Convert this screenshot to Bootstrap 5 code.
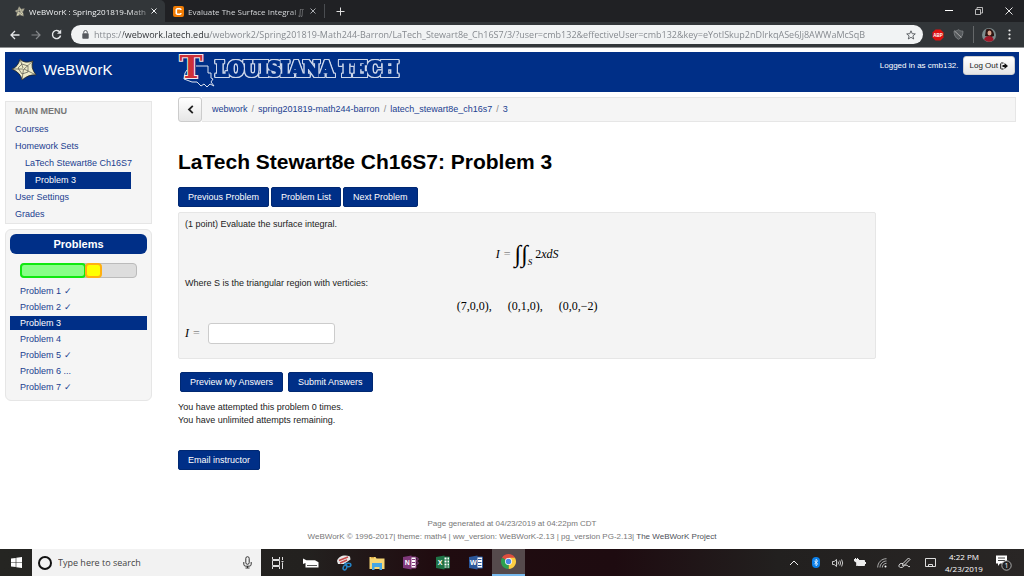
<!DOCTYPE html>
<html lang="en">
<head>
<meta charset="utf-8">
<meta name="viewport" content="width=device-width, initial-scale=1">
<title>WeBWorK : Spring201819-Math244-Barron</title>
<link href="https://cdn.jsdelivr.net/npm/bootstrap@5.3.0/dist/css/bootstrap.min.css" rel="stylesheet">
<style>
:root { --navy: #002f87; --panel: #f5f5f5; --line: #e6e6e6; --chalk: #cdd7ea; }
body { font: 9px/13px "Liberation Sans", Arial, sans-serif; color: #222; background: #fff; }
button, input { font: inherit; }
a { color: #1b4090; text-decoration: none; }
svg { display: block; flex: none; overflow: visible; }
.plain { border: 0; padding: 0; background: none; color: inherit; display: flex; align-items: center; justify-content: center; }
.ui-font { font-family: "Open Sans", "Noto Sans", sans-serif; }

/* browser window */
.tabstrip { background: #202124; color: #d5d7da; height: 22px; }
.tab { height: 22px; padding: 0 7px 0 14px; gap: 4px; width: 165px; }
.tab.current { background: #323639; border-radius: 0 5px 0 0; color: #f1f3f4; }
.tab.other { width: 160px; padding-left: 8px; border-right: 1px solid #4a4d51; height: 14px; }
.tab-title { flex: 1; font-size: 8px; white-space: nowrap; min-width: 0; color: inherit;
  -webkit-mask-image: linear-gradient(90deg, #000 85%, #0006); mask-image: linear-gradient(90deg, #000 85%, #0006); }
.win-btn { width: 30px; height: 20px; }
.toolbar { background: #323639; color: #e4e6e8; height: 26px; padding: 0 4px; border-bottom: 1px solid #8f9193; }
.nav-btn { width: 21px; height: 20px; }
.omnibox { background: #f1f3f4; border-radius: 10px; height: 19px; padding: 0 7px; color: #5f6368; gap: 5px; }
.url { border: 0; outline: 0; padding: 0; flex: 1; min-width: 0; height: 17px; font-size: 9px;
  background: linear-gradient(90deg, #80848a 29px, #2b2e32 29px 115px, #80848a 115px);
  -webkit-background-clip: text; background-clip: text; -webkit-text-fill-color: transparent; }

/* WeBWorK header */
.page { padding: 4px 5px 0; }
.masthead { background: var(--navy); color: #fff; min-height: 40px; }
.brand-side { flex: 0 0 17%; padding-left: 6px; padding-bottom: 4px; gap: 6px; }
.brand-name { font-size: 15px; line-height: 18px; color: #fff; }
.school { font: bold 20px/26px "DejaVu Serif Condensed", "DejaVu Serif", serif; color: var(--navy); -webkit-text-stroke: 2px var(--navy); white-space: nowrap;
  filter: drop-shadow(1px 0 0 var(--chalk)) drop-shadow(-1px 0 0 var(--chalk)) drop-shadow(0 1px 0 var(--chalk)) drop-shadow(0 -1px 0 var(--chalk)); }
.account { font-size: 8px; }
.logout { background: linear-gradient(#fff, #e6e6e6); border: 1px solid #d0d0d0; border-radius: 3px; color: #222; padding: 2px 6px; gap: 2px; display: flex; align-items: center; }

/* sidebar */
.sidebar { flex: 0 0 147px; width: 147px; padding-top: 9px; }
.panel { background: var(--panel); border: 1px solid var(--line); }
.menu { padding: 0 9px; margin-bottom: 5px; }
.menu h2 { font-size: 9px; font-weight: bold; line-height: 18px; color: #777; margin: 0 0 1px; }
.menu a { display: block; line-height: 17px; }
.menu .nested { padding-left: 10px; white-space: nowrap; }
.menu .here { background: var(--navy); color: #fff; margin: 0 11px 0 10px; padding-left: 10px; }
.problems { border-radius: 6px; padding: 4px 4px 4px; }
.problems h2 { background: var(--navy); color: #fff; border-radius: 6px; font-size: 11px; font-weight: bold; line-height: 20px; text-align: center; margin: 0 0 9px; }
.meter { height: 15px; margin: 0 10px 6px; background: #ddd; border: 1px solid #bbb; border-radius: 4px; }
.meter-part { height: 15px; margin: -1px 0 -1px -1px; border-radius: 4px; border: 2px solid; }
.meter-done { background: #88ff88; border-color: #10e810; }
.meter-half { background: #ffff00; border-color: #ffb010; }
.problems a { display: block; line-height: 14px; padding-left: 10px; margin-bottom: 2px; }
.problems .here { background: var(--navy); color: #fff; }

/* main column */
.main { flex: 1; min-width: 0; padding: 5px 3px 0 26px; }
.crumb-back { width: 24px; height: 25px; background: linear-gradient(#fff, #e6e6e6); border: 1px solid #ccc; border-radius: 3px; }
.crumbs { flex: 1; background: var(--panel); border: 1px solid var(--line); border-left: 0; padding: 5px 10px; gap: 4px; margin: 0; }
.crumbs li { white-space: nowrap; }
.slash { color: #888; }
h1 { font-size: 21px; line-height: 26px; font-weight: bold; color: #000; margin: 27px 0 12px; }
.btn-navy { --bs-btn-bg: var(--navy); --bs-btn-color: #fff; --bs-btn-border-color: #002872; --bs-btn-hover-bg: #00236a; --bs-btn-hover-color: #fff;
  --bs-btn-padding-x: 9px; --bs-btn-padding-y: 2px; --bs-btn-font-size: 9px; --bs-btn-line-height: 14px; --bs-btn-border-radius: 2px; }
.step-buttons { gap: 2px; }
.problem { background: #f4f4f4; border: 1px solid var(--line); border-radius: 2px; padding: 5px 6px 14px; margin-top: 5px; }
.formula { font-family: "Liberation Serif", "Times New Roman", serif; font-size: 12px; color: #000; display: flex; align-items: center; justify-content: center; }
.display-math { margin: 10px 0; }
.equals { color: #8a8a8a; margin: 0 4px; }
.integral { font: italic 24px/26px "Liberation Serif", serif; }
.under { font-size: 9px; align-self: flex-end; line-height: 10px; }
.answer { width: 127px; height: 21px; border: 1px solid #ccc; border-radius: 3px; background: #fff; padding: 2px 4px; }
.answer-buttons { gap: 5px; margin: 13px 0 9px 2px; }
.attempts { margin-bottom: 23px; }
.foot { color: #777; font-size: 8px; line-height: 13px; text-align: center; padding-bottom: 6px; }
.foot a { color: #4d5058; }

/* taskbar */
.taskbar { height: 27px; background: linear-gradient(90deg, #252522 0, #23211f 30%, #200c10 42%, #1e0b10 60%, #22201f 76%, #292625 100%); color: #fff; }
.start { width: 32px; height: 27px; }
.seek { width: 229px; height: 27px; background: #f2f2f2; color: #222; padding: 0 9px 0 6px; gap: 6px; }
.seek input { border: 0; outline: 0; background: none; flex: 1; min-width: 0; padding: 0; font-size: 9px; }
.seek input::placeholder { color: #444; opacity: 1; }
.app { width: 33px; height: 27px; }
.app.running { background: #554a4c; border-bottom: 2px solid #76b9ed; }
.tray { width: 22px; height: 27px; }
.clock { width: 46px; font-size: 8px; line-height: 12px; text-align: center; }
</style>
</head>
<body class="min-vh-100 d-flex flex-column">

<header class="ui-font">
  <div class="tabstrip d-flex align-items-center">
    <div class="tab current d-flex align-items-center">
      <svg width="11" height="11" viewBox="0 0 26 26"><path d="M2 12 9 8 12 1 17 7 25 6 21 14 23 24 14 21 6 24 7 16Z" fill="#e6e2bd" stroke="#555" stroke-width="1"/><path d="M9 8 17 7 21 14 14 21 7 16ZM2 12 21 14M12 1 14 21M25 6 7 16M23 24 9 8" fill="none" stroke="#555"/></svg>
      <a class="tab-title" href="#">WeBWorK : Spring201819-Math2</a>
      <button class="plain" aria-label="Close tab"><svg width="8" height="8" viewBox="0 0 8 8" stroke="currentColor"><path d="M1.500 1.500l5 5M6.500 1.500l-5 5"/></svg></button>
    </div>
    <div class="tab other d-flex align-items-center">
      <svg width="11" height="11" viewBox="0 0 11 11"><rect width="11" height="11" rx="2" fill="#f07c05"/><path d="M7.800 4V3.300L7 2.700H4.200L3.300 3.500v4l.9.8H7l.8-.6V7" fill="none" stroke="#fff" stroke-width="1.600"/></svg>
      <a class="tab-title" href="#">Evaluate The Surface Integral ∬</a>
      <button class="plain" aria-label="Close tab"><svg width="8" height="8" viewBox="0 0 8 8" stroke="#a9acb0"><path d="M1.500 1.500l5 5M6.500 1.500l-5 5"/></svg></button>
    </div>
    <button class="plain win-btn" aria-label="New tab"><svg width="9" height="9" viewBox="0 0 9 9" stroke="#e0e0e0"><path d="M4.500.5v8M.5 4.500h8"/></svg></button>
    <div class="d-flex ms-auto">
      <button class="plain win-btn" aria-label="Minimize"><svg width="8" height="8" viewBox="0 0 8 8" stroke="#fff"><path d="M0 3.500h8"/></svg></button>
      <button class="plain win-btn" aria-label="Restore"><svg width="8" height="8" viewBox="0 0 8 8" stroke="#ddd" fill="none"><path d="M.5 2.500h5v5h-5zM2 2.500V.5h5.500V6H5.500" stroke-width=".8"/></svg></button>
      <button class="plain win-btn" aria-label="Close"><svg width="8" height="8" viewBox="0 0 8 8" stroke="#fff"><path d="M.5.5l7 7M7.500.5l-7 7" stroke-width=".9"/></svg></button>
    </div>
  </div>
  <div class="toolbar d-flex align-items-center">
    <button class="plain nav-btn" aria-label="Back"><svg width="10" height="10" viewBox="0 0 10 10" fill="none" stroke="currentColor" stroke-width="1.300"><path d="M9.500 5H1M5 1 1 5l4 4"/></svg></button>
    <button class="plain nav-btn" aria-label="Forward"><svg width="10" height="10" viewBox="0 0 10 10" fill="none" stroke="#85888b" stroke-width="1.200"><path d="M.5 5H9M5 1l4 4-4 4"/></svg></button>
    <button class="plain nav-btn me-1" aria-label="Reload"><svg width="11" height="11" viewBox="0 0 11 11" fill="none" stroke="currentColor" stroke-width="1.400"><path d="M9 3.200A4.100 4.100 0 1 0 9.600 6.500"/><path d="M10.200.5v4.200H6z" fill="currentColor" stroke="none"/></svg></button>
    <form class="omnibox d-flex align-items-center flex-grow-1">
      <svg class="ms-1" width="7" height="9" viewBox="0 0 7 9"><rect y="3.300" x=".3" width="6.400" height="5.400" rx=".8" fill="#55595e"/><path d="M1.700 3.500V2.300a1.800 1.800 0 0 1 3.600 0v1.200" fill="none" stroke="#55595e"/></svg>
      <input class="url" aria-label="Address" value="https://webwork.latech.edu/webwork2/Spring201819-Math244-Barron/LaTech_Stewart8e_Ch16S7/3/?user=cmb132&amp;effectiveUser=cmb132&amp;key=eYotISkup2nDIrkqASe6Jj8AWWaMcSqB">
      <svg width="10" height="10" viewBox="0 0 10 10" fill="none" stroke="#55595e" stroke-width=".9"><path d="M5 .8l1.200 2.900 3.100.2-2.400 2 .8 3.100L5 7.300 2.300 9l.8-3.100-2.400-2 3.100-.2z"/></svg>
    </form>
    <button class="plain nav-btn ms-1" aria-label="Adblock Plus"><svg width="12" height="12" viewBox="0 0 12 12"><path d="M3.500.5h5l3 3v5l-3 3h-5l-3-3v-5z" fill="#e01010"/><text x="6" y="7.800" font-size="4.500" font-weight="bold" text-anchor="middle" fill="#fff" font-family="Liberation Sans">ABP</text></svg></button>
    <button class="plain nav-btn" aria-label="Shield"><svg width="11" height="11" viewBox="0 0 11 11" stroke="#777b7e" fill="#55595c"><path d="M1 2.200C3 2.200 4.300 1.500 5.500.7 6.700 1.500 8 2.200 10 2.200 10 6 8.500 9 5.500 10.300 2.500 9 1 6 1 2.200z"/><path d="M1.500 2l7 6.500" stroke="#aaa"/></svg></button>
    <span class="vr my-1 ms-1 text-white"></span>
    <button class="plain nav-btn ms-1" aria-label="Profile"><svg width="14" height="14" viewBox="0 0 14 14"><circle cx="7" cy="7" r="7" fill="#7c8c8d"/><path d="M4 1.500C8.500-1 12.500 3 12 8l-3 1-6-1z" fill="#2c1513"/><ellipse cx="7.500" cy="5" rx="2" ry="2.600" fill="#d9a58c"/><path d="M2 11.500C3 8.500 5 8 7.500 8c3 .5 4 2 4 4.300a7 7 0 0 1-9.500-.8z" fill="#a01828"/></svg></button>
    <button class="plain nav-btn" aria-label="Menu"><svg width="3" height="11" viewBox="0 0 3 11" fill="#eee"><circle cx="1.500" cy="1.500" r="1.100"/><circle cx="1.500" cy="5.500" r="1.100"/><circle cx="1.500" cy="9.500" r="1.100"/></svg></button>
  </div>
</header>

<div class="page flex-grow-1 d-flex flex-column">
  <div class="masthead d-flex">
    <div class="brand-side d-flex align-items-center">
      <svg width="26" height="24" viewBox="0 0 26 24"><path d="M1 11Q7 9 9 1 13 6 22 3 19 9 25 17 18 16 11 22 10 15 1 11Z" fill="#eeebc9" stroke="#24241e" stroke-width=".8"/><path d="M7 10 11 6 17 8 17 14 11 16ZM1 11l11 0M9 1l3 9M22 3l-9 8M25 17l-12-6M11 22l1.500-11" fill="none" stroke="#55554a" stroke-width=".7"/></svg>
      <a href="#" class="brand-name">WeBWorK</a>
    </div>
    <div class="d-flex">
      <svg width="38" height="38" viewBox="0 0 38 38"><path d="M19 14H31V21H34V26L36 27 34 30 37 34 33 32 30 35 27 32 24 34 20 30 15 30 7 27 8 21 10 18" fill="#002f87" stroke="#dce3f0" stroke-width="1"/><text x="14" y="26" text-anchor="middle" font-family="DejaVu Serif" font-weight="bold" font-size="31" fill="#cc3038" stroke="#f4e9ec" stroke-width="2" paint-order="stroke">T</text></svg>
      <a href="#" class="school pt-1">LOUISIANA TECH</a>
    </div>
    <div class="account ms-auto d-flex align-items-center align-self-start pt-1 pe-1">
      <span class="me-1">Logged in as cmb132.</span>
      <button class="logout">Log Out <svg width="8" height="8" viewBox="0 0 8 8"><path d="M3.500 1H1.300L.7 1.600v4.800l.6.6h2.200" fill="none" stroke="#111"/><path d="M2.500 2.900h2V1L8 4 4.500 7V5.100h-2z" fill="#111"/></svg></button>
    </div>
  </div>

  <div class="d-flex align-items-start">
    <aside class="sidebar">
      <nav class="panel menu" aria-label="Main menu">
        <h2>MAIN MENU</h2>
        <a href="#">Courses</a>
        <a href="#">Homework Sets</a>
        <a href="#" class="nested">LaTech Stewart8e Ch16S7</a>
        <a href="#" class="here">Problem 3</a>
        <a href="#">User Settings</a>
        <a href="#">Grades</a>
      </nav>
      <nav class="panel problems" aria-label="Problems">
        <h2>Problems</h2>
        <div class="meter d-flex"><div class="meter-part meter-done" style="width:57%"></div><div class="meter-part meter-half" style="width:15%"></div></div>
        <a href="#">Problem 1 ✓</a>
        <a href="#">Problem 2 ✓</a>
        <a href="#" class="here">Problem 3</a>
        <a href="#">Problem 4</a>
        <a href="#">Problem 5 ✓</a>
        <a href="#">Problem 6 ...</a>
        <a href="#">Problem 7 ✓</a>
      </nav>
    </aside>

    <main class="main">
      <nav class="d-flex" aria-label="Breadcrumb">
        <button class="plain crumb-back" aria-label="Back"><svg width="7" height="9" viewBox="0 0 7 9"><path d="M5.800.8 2 4.500l3.800 3.700" fill="none" stroke="#222" stroke-width="1.800"/></svg></button>
        <ol class="crumbs d-flex list-unstyled">
          <li><a href="#">webwork</a></li><li class="slash">/</li>
          <li><a href="#">spring201819-math244-barron</a></li><li class="slash">/</li>
          <li><a href="#">latech_stewart8e_ch16s7</a></li><li class="slash">/</li>
          <li><a href="#">3</a></li>
        </ol>
      </nav>
      <h1>LaTech Stewart8e Ch16S7: Problem 3</h1>
      <div class="d-flex step-buttons">
        <button class="btn btn-navy">Previous Problem</button>
        <button class="btn btn-navy">Problem List</button>
        <button class="btn btn-navy">Next Problem</button>
      </div>
      <div class="row g-0"><div class="col-10">
        <form class="problem">
          <div>(1 point) Evaluate the surface integral.</div>
          <div class="formula display-math"><i>I</i><span class="equals">=</span><span class="integral">∫∫</span><i class="under">S</i><span>&nbsp;2<i>xdS</i></span></div>
          <div>Where S is the triangular region with verticies:</div>
          <div class="formula display-math gap-3"><span>(7,0,0),</span><span>(0,1,0),</span><span>(0,0,−2)</span></div>
          <div class="d-flex align-items-center"><label for="ans" class="formula"><i>I</i><span class="equals">=</span></label><input id="ans" class="answer ms-1"></div>
        </form>
      </div></div>
      <div class="d-flex answer-buttons">
        <button class="btn btn-navy">Preview My Answers</button>
        <button class="btn btn-navy">Submit Answers</button>
      </div>
      <p class="attempts">You have attempted this problem 0 times.<br>You have unlimited attempts remaining.</p>
      <button class="btn btn-navy">Email instructor</button>
    </main>
  </div>

  <footer class="foot mt-auto">
    <div>Page generated at 04/23/2019 at 04:22pm CDT</div>
    <div>WeBWorK © 1996-2017| theme: math4 | ww_version: WeBWorK-2.13 | pg_version PG-2.13| <a href="#">The WeBWorK Project</a></div>
  </footer>
</div>

<div class="taskbar ui-font d-flex align-items-center">
  <button class="plain start" aria-label="Start"><svg width="11" height="11" viewBox="0 0 11 11" fill="#fff"><path d="M0 1.600 4.700.9v4.300H0zM5.300.8 11 0v5.200H5.300zM0 5.800h4.700v4.300L0 9.400zM5.300 5.800H11V11l-5.700-.8z"/></svg></button>
  <form class="seek d-flex align-items-center">
    <svg width="14" height="14" viewBox="0 0 14 14"><circle cx="7" cy="7" r="6" fill="none" stroke="#111" stroke-width="2"/></svg>
    <input type="text" placeholder="Type here to search" aria-label="Search">
    <svg width="9" height="13" viewBox="0 0 9 13" fill="none" stroke="#333"><rect x="2.800" y=".7" width="3.400" height="7.600" rx="1.700"/><path d="M.8 6v2.200a2 2 0 0 0 2 2h3.400a2 2 0 0 0 2-2V6M4.500 10v2M2.500 12h4"/></svg>
  </form>
  <button class="plain app" aria-label="Task view"><svg width="12" height="12" viewBox="0 0 12 12" fill="none" stroke="#ddd"><path d="M.5 0v2.500h7V0M.5 12V9.500h7V12M.5 3.500h7v5h-7zM10.500 0v3M10.500 5.500V12M9.500 4.500h2"/></svg></button>
  <button class="plain app" aria-label="Camera"><svg width="17" height="10" viewBox="0 0 17 10" fill="#fff"><path d="M1 .5 4.500 2.200H13l3.500 2V9.500H3.500V5L1 6z"/><path d="M5 7.500h10" stroke="#555"/></svg></button>
  <button class="plain app" aria-label="Snipping tool"><svg width="16" height="16" viewBox="0 0 16 16"><path d="M1 6C2 1 9-1 14 1.500l.5 3L8 9 2 9z" fill="#e8e8e8"/><path d="M3 5.500l9-3.500M4 8l7-3" stroke="#c94a4a" stroke-width="1.500"/><g fill="none" stroke="#2583c6" stroke-width="1.500"><path d="M8.500 8l2 2"/><ellipse cx="9" cy="12.500" rx="1.700" ry="2.500" transform="rotate(25 9 12.500)"/><ellipse cx="12.500" cy="10" rx="2.400" ry="1.700"/></g></svg></button>
  <button class="plain app" aria-label="File Explorer"><svg width="16" height="14" viewBox="0 0 16 14"><path d="M.5 1h6l1 1.500h8V13H.5z" fill="#f8d775"/><path d="M2 1.700h3" stroke="#c9912a"/><path d="M3 7h10v7h-2.500v-3h-5v3H3z" fill="#46a7e5"/></svg></button>
  <button class="plain app" aria-label="OneNote"><svg width="16" height="15" viewBox="0 0 16 15"><path d="M8 2h6v11H8" fill="#fff" stroke="#80397b"/><path d="M10 4.500h3M10 7.500h3M10 10.500h3M14 3h2v2h-2M14 7h2v2h-2" stroke="#80397b"/><path d="M1 2 9.500.5v14L1 13z" fill="#80397b"/><text x="5.200" y="10" font-family="Liberation Sans" font-size="7" font-weight="bold" fill="#fff" text-anchor="middle">N</text></svg></button>
  <button class="plain app" aria-label="Excel"><svg width="16" height="15" viewBox="0 0 16 15"><path d="M8 2h6.500v11H8" fill="#fff" stroke="#1f7346"/><path d="M12 2v11M9 5h5M9 8h5M9 11h5" stroke="#1f7346"/><path d="M1 2 9.500.5v14L1 13z" fill="#1f7346"/><text x="5.200" y="10" font-family="Liberation Sans" font-size="7" font-weight="bold" fill="#fff" text-anchor="middle">X</text></svg></button>
  <button class="plain app" aria-label="Word"><svg width="16" height="15" viewBox="0 0 16 15"><path d="M8 2h6.500v11H8" fill="#fff" stroke="#2b579a"/><path d="M10 4.500h3.500M10 7.500h3.500M10 10.500h3.500" stroke="#2b579a"/><path d="M1 2 9.500.5v14L1 13z" fill="#2b579a"/><text x="5.200" y="10" font-family="Liberation Sans" font-size="7" font-weight="bold" fill="#fff" text-anchor="middle">W</text></svg></button>
  <button class="plain app running" aria-label="Chrome"><svg width="15" height="15" viewBox="0 0 16 16"><path d="M8 8 1.070 4A8 8 0 0 1 14.930 4z" fill="#de4e3f"/><path d="M8 8 14.930 4A8 8 0 0 1 8 16z" fill="#fbcd42"/><path d="M8 8v8A8 8 0 0 1 1.070 4z" fill="#2da14f"/><path d="M8 4h6.900L11.500 10z" fill="#fbcd42"/><circle cx="8" cy="8" r="3.700" fill="#fff"/><circle cx="8" cy="8" r="2.900" fill="#4a87e8"/></svg></button>
  <div class="ms-auto me-1 d-flex align-items-center">
    <button class="plain tray" aria-label="Show hidden icons"><svg width="10" height="6" viewBox="0 0 10 6" fill="none" stroke="#eee"><path d="M1 5l4-4 4 4"/></svg></button>
    <button class="plain tray" aria-label="Bluetooth"><svg width="8" height="11" viewBox="0 0 8 11"><rect width="8" height="11" rx="4" fill="#0b80ea"/><path d="M2.300 3.700l3.400 3.400L4 8.700V2.300l1.700 1.600-3.400 3.400" fill="none" stroke="#fff" stroke-width=".8"/></svg></button>
    <button class="plain tray" aria-label="Volume"><svg width="12" height="10" viewBox="0 0 12 10" fill="none" stroke="#ddd" stroke-width=".9"><path d="M.5 3.500h1.700L4.500 1.500v7L2.200 6.500H.5zM6 3.500q1 1.500 0 3M7.800 2.500q1.500 2.500 0 5M9.600 1.500q2.200 3.500 0 7"/></svg></button>
    <button class="plain tray" aria-label="Battery"><svg width="12" height="9" viewBox="0 0 12 9"><path d="M3.500 2.500h7v5h-7z" fill="#eee" stroke="#eee"/><path d="M11 4h1v2h-1M0 1h5v2L3.500 4.500H2L0 3z" fill="#eee"/><path d="M1.500 0v1M3.500 0v1M2.700 4v4" stroke="#eee"/></svg></button>
    <button class="plain tray" aria-label="Network"><svg width="10" height="10" viewBox="0 0 10 10" fill="none" stroke="#bbb" stroke-width=".9"><path d="M.7 9.500C.7 4.500 4.500.7 9.500.7M3 9.500C3 6 6 3 9.500 3M5.300 9.500c0-2.300 1.900-4.200 4.200-4.200"/><circle cx="8.500" cy="8.500" r="1" fill="#fff" stroke="none"/></svg></button>
    <button class="plain tray" aria-label="Pen"><svg width="13" height="12" viewBox="0 0 13 12" fill="none" stroke="#ddd"><path d="M5 6.500 10.500 1l1.500 1.500L6.500 8l-2 .5zM5 6.500C1 5.500-.5 10 2.500 10.500S6 8 8 8s2 2.500 4 1.500"/></svg></button>
    <button class="plain tray ms-1" aria-label="Touchpad"><svg width="11" height="9" viewBox="0 0 11 9" fill="none" stroke="#ddd"><path d="M.5.5h10v8H.5zM3.500 8V6.500h4V8"/></svg></button>
    <button class="plain clock">4:22 PM<br>4/23/2019</button>
    <button class="plain app" aria-label="Notifications"><svg width="17" height="17" viewBox="0 0 17 17"><path d="M1 1.500h11v8H5L3 12V9.500H1z" fill="#fff"/><path d="M3 4h7M3 6.500h7" stroke="#444"/><circle cx="11.500" cy="11.500" r="4.700" fill="#222" stroke="#ccc" stroke-width=".8"/><text x="11.500" y="14" font-size="7" fill="#fff" text-anchor="middle">1</text></svg></button>
  </div>
</div>

<script src="https://cdn.jsdelivr.net/npm/bootstrap@5.3.0/dist/js/bootstrap.bundle.min.js"></script>
</body>
</html>
